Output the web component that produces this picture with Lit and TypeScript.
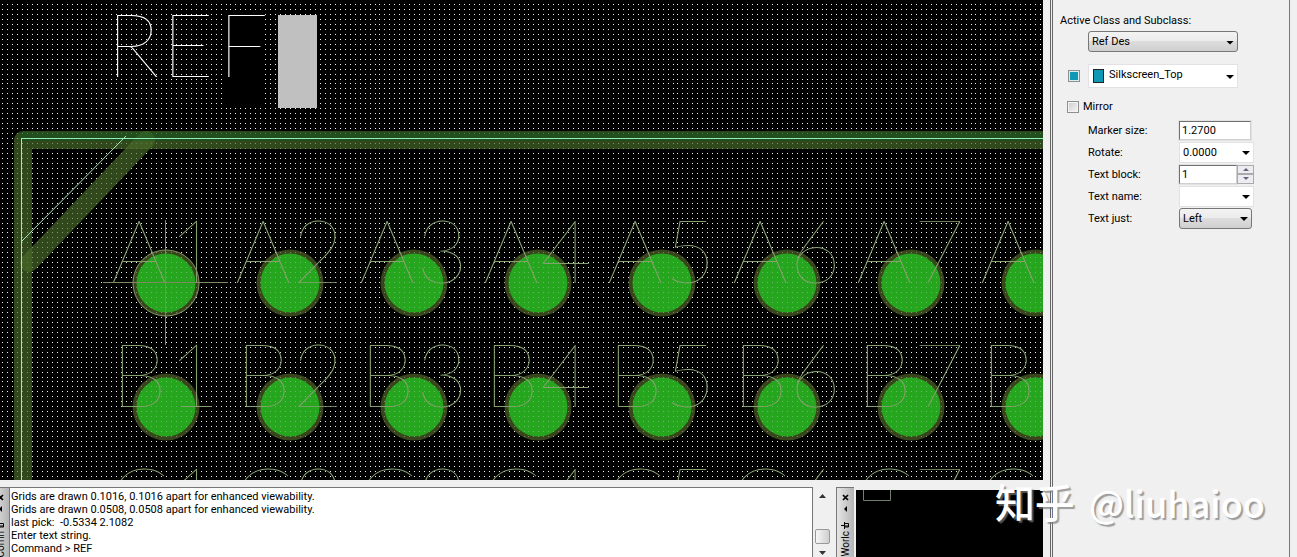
import { LitElement, html, svg, css } from "lit";
import { customElement } from "lit/decorators.js";

const COLS = [166, 290, 414, 538, 662, 787, 911, 1035];
const ROWS: [string, number][] = [["A", 283], ["B", 407], ["C", 531]];
const GRID_TILE = 149;
const GRID_STEPS = 30;

function gridPath(): string {
  const at = (i: number) => Math.round((i * GRID_TILE) / GRID_STEPS);
  let d = "";
  for (let r = 0; r < GRID_STEPS; r++) {
    for (let c = 0; c < GRID_STEPS; c++) d += `M${at(c)} ${at(r)}h1v1h-1z`;
  }
  return d;
}
const GRID = gridPath();

@customElement("board-canvas")
class BoardCanvas extends LitElement {
  static styles = css`
    :host { display: block; background: #000; overflow: hidden; }
    .art { display: block; width: 100%; height: 100%; }
    .dots { fill: #f4f4f4; }
    .veil { fill: none; stroke: #4a6c2a; stroke-opacity: .66; stroke-width: 18; stroke-linejoin: round; stroke-linecap: round; }
    .glow { fill: none; stroke: #0c5a22; stroke-opacity: .4; stroke-width: 9; }
    .edge { fill: none; stroke: #8ff0bb; shape-rendering: crispEdges; }
    .chamfer { fill: none; stroke: #a5e8c2; }
    .ring { fill: #3c4a1e; fill-opacity: .92; }
    .pad { fill: #26a51e; }
    .paddots { fill: url(#dots); opacity: .3; }
    .cross { fill: none; stroke: #7f8a62; }
    .ref { font: 100 89px Lato, sans-serif; fill: #fff; text-anchor: middle; }
    .pin { font: 100 89px Lato, sans-serif; fill: #86a070; text-anchor: middle; }
    .void { fill: #000; }
    .cursor { fill: #c0c0c0; }
  `;
  render() {
    return html`<svg class="art" role="img" aria-label="Board layout">
      <defs>
        <pattern id="dots" x="2" y="4" width="149" height="149" patternUnits="userSpaceOnUse">
          <path class="dots" shape-rendering="crispEdges" d=${GRID}></path>
        </pattern>
      </defs>
      <rect width="100%" height="100%" fill="url(#dots)"></rect>
      <rect class="void" x="223" y="12" width="42" height="95"></rect>
      <rect class="cursor" x="278" y="15" width="39" height="93"></rect>
      <text class="ref" x="133 188 243" y="77">REF</text>
      <path class="veil" d="M3000 140H23V3000"></path>
      <path class="veil" d="M146 140L29 263"></path>
      <path class="glow" d="M3000 136.500H19"></path>
      <path class="edge" d="M3000 138.500H21.500V3000"></path>
      <path class="chamfer" d="M126 136L22 241"></path>
      ${ROWS.map(([row, y]) => COLS.map((x, i) => svg`
        ${y < 500 ? svg`<circle class="ring" cx=${x} cy=${y} r="33.500"></circle>
        <circle class="pad" cx=${x} cy=${y} r="29.500"></circle>
        <circle class="paddots" cx=${x} cy=${y} r="33"></circle>` : ""}
        <text class="pin" x=${`${x - 27} ${x + 28}`} y=${y}>${row}${i + 1}</text>`))}
      <circle class="cross" cx="166" cy="283" r="33"></circle>
      <path class="cross" d="M103 282.500H228M165.500 220V345"></path>
    </svg>`;
  }
}

@customElement("dock-strip")
class DockStrip extends LitElement {
  static properties = { label: {} };
  declare label: string;
  static styles = css`
    :host { display: flex; flex-direction: column; align-items: center; overflow: hidden; box-sizing: border-box; width: 18px; padding-top: 3px; border-top: 1px solid #777; border-left: 1px solid #777; background: linear-gradient(90deg, #e6e6e6, #b4b4b4); }
    .tool { flex: none; border: 0; padding: 0; background: none; height: 12px; display: flex; align-items: center; }
    .pin { margin-top: 4px; }
    .label { writing-mode: vertical-rl; transform: rotate(180deg); font: 10px/13px Roboto, sans-serif; white-space: nowrap; }
  `;
  render() {
    return html`
      <button class="tool" aria-label="Close"><svg width="7" height="7"><path d="M1 1L6 6M6 1L1 6" stroke="#000" stroke-width="1.700"/></svg></button>
      <button class="tool" aria-label="Collapse"><svg width="7" height="6"><path d="M5 0V6L2 3z"/></svg></button>
      <button class="tool pin" aria-label="Pin"><svg width="9" height="9"><path d="M0 4.500H3M3.500 1V8M3 2.500H7.500V6H3M3 5H7" fill="none" stroke="#000"/></svg></button>
      <span class="label">${this.label}</span>`;
  }
}

@customElement("app-root")
class AppRoot extends LitElement {
  static styles = css`
    :host { display: grid; grid-template-columns: minmax(0, 1fr) 254px; height: 100vh; position: relative; overflow: hidden; background: #f0f0f0; color: #000; font: 11px/13px Roboto, sans-serif; }
    .work { display: flex; flex-direction: column; min-width: 0; min-height: 0; }
    .board { flex: 1; min-height: 0; }
    .docks { display: flex; height: 70px; margin-top: 7px; }
    .crop { width: 9px; overflow: hidden; display: flex; justify-content: flex-end; }
    .crop dock-strip, .strip { flex: none; }
    .log { flex: 1; min-width: 0; background: #fff; border: solid #777; border-width: 1px 1px 0; padding: 2px 1px 0; overflow: hidden; }
    .line { margin: 0; white-space: pre; }
    .scroll { width: 23px; display: flex; flex-direction: column; align-items: center; }
    .arrow { height: 18px; display: flex; align-items: center; padding-right: 4px; }
    .track { flex: 1; display: flex; align-items: flex-end; padding: 0 4px 5px 0; }
    .scroll .arrow:last-child { height: 8px; }
    .thumb { width: 15px; height: 15px; box-sizing: border-box; border: 1px solid #999; border-radius: 2px; background: linear-gradient(90deg, #f7f7f7, #cfcfcf); }
    .world { width: 187px; margin: 3px 0 0 2px; background: #000; }
    .world svg { display: block; }
    .panel { box-sizing: border-box; margin: 0 7px; border: solid #777; border-width: 0 1px 0 0; border-left: 3px double #666; padding: 14px 7px; }
    .row { display: flex; align-items: center; }
    .class-row { padding: 4px 0 0 28px; }
    .sub-row { padding: 12px 0 0 8px; gap: 8px; }
    .mirror { padding: 12px 0 0 7px; gap: 4px; }
    .fields { display: grid; grid-template-columns: 91px 75px; grid-auto-rows: 22px; align-items: center; padding: 6px 0 0 28px; }
    select, input, button { font: inherit; color: inherit; }
    .pick { position: relative; display: flex; }
    .pick select { appearance: none; width: 100%; box-sizing: border-box; margin: 0; padding: 0 16px 0 3px; height: 21px; border: 1px solid #e2e2e2; border-radius: 0; background: #fff; }
    .pick::after { content: ""; position: absolute; right: 4px; top: 50%; width: 8px; height: 4px; margin-top: -1px; background: #000; clip-path: polygon(0 0, 100% 0, 50% 100%); pointer-events: none; }
    .wide { width: 150px; }
    .pick .raised { height: 21px; border: 1px solid #777; border-radius: 3px; background: linear-gradient(#f3f3f3, #ebebeb 50%, #dddddd 50%, #cfcfcf); }
    .just { width: 73px; }
    .pick .tall { height: 24px; padding-left: 20px; padding-bottom: 3px; }
    .swatch { position: absolute; left: 5px; top: 5px; width: 9px; height: 12px; border: 1px solid #222; background: #0f98b4; }
    .tick { appearance: none; margin: 0; box-sizing: border-box; width: 12px; height: 12px; border: 1px solid #8e8f8f; box-shadow: inset 0 0 0 1px #f4f4f4; background: linear-gradient(135deg, #cdcdcd, #f6f6f6); flex: none; }
    .tick.on { background: #0f98b4; box-shadow: inset 0 0 0 1px #d8eef2; }
    .box { box-sizing: border-box; margin: 0; padding: 0 0 0 2px; height: 19px; min-width: 0; border: 1px solid; border-color: #707070 #d0d0d0 #d0d0d0 #707070; outline: 1px solid #e2e2e2; background: #fff; }
    .size { width: 72px; }
    .spin { display: flex; }
    .spin .box { width: 58px; }
    .steps { display: flex; flex-direction: column; width: 17px; }
    .step { flex: 1; border: 1px solid #aaa; background: #ececf2; padding: 0; display: flex; align-items: center; justify-content: center; }
    .mark { position: absolute; right: 32px; bottom: 28px; display: flex; align-items: baseline; gap: 14px; font: 500 36px/54px "Noto Sans CJK SC", sans-serif; color: #fff; text-shadow: 2px 2px 1px rgba(120, 120, 120, .7); white-space: pre; }
    .brand { font-size: 40px; }
  `;
  render() {
    return html`
      <main class="work">
        <board-canvas class="board"></board-canvas>
        <div class="docks">
          <div class="crop"><dock-strip label="Comn"></dock-strip></div>
          <div class="log" role="log">
            <p class="line">Grids are drawn 0.1016, 0.1016 apart for enhanced viewability.</p>
            <p class="line">Grids are drawn 0.0508, 0.0508 apart for enhanced viewability.</p>
            <p class="line">last pick:  -0.5334 2.1082</p>
            <p class="line">Enter text string.</p>
            <p class="line">Command &gt; REF</p>
          </div>
          <div class="scroll" aria-hidden="true">
            <span class="arrow"><svg width="7" height="4"><path d="M0 4L3.500 0L7 4z" fill="#333"/></svg></span>
            <span class="track"><span class="thumb"></span></span>
            <span class="arrow"><svg width="7" height="4"><path d="M0 0H7L3.500 4z" fill="#333"/></svg></span>
          </div>
          <dock-strip class="strip" label="Worlc"></dock-strip>
          <div class="world"><svg width="60" height="20"><path d="M7.500 0V10.500H34.500V0" fill="none" stroke="#70806a"/></svg></div>
        </div>
      </main>
      <form class="panel">
        <label for="cls">Active Class and Subclass:</label>
        <div class="row class-row"><span class="pick wide"><select id="cls" class="raised"><option>Ref Des</option></select></span></div>
        <div class="row sub-row">
          <input class="tick on" type="checkbox" checked aria-label="Subclass visible">
          <span class="pick wide"><select class="tall" aria-label="Subclass"><option>Silkscreen_Top</option></select><span class="swatch"></span></span>
        </div>
        <div class="row mirror"><input class="tick" type="checkbox" id="mirror"><label for="mirror">Mirror</label></div>
        <div class="fields">
          <label for="size">Marker size:</label><input class="box size" id="size" .value=${"1.2700"}>
          <label for="rot">Rotate:</label><span class="pick"><select id="rot"><option>0.0000</option></select></span>
          <label for="block">Text block:</label>
          <span class="spin"><input class="box" id="block" .value=${"1"}><span class="steps">
            <button class="step" type="button" aria-label="Increase"><svg width="6" height="3"><path d="M0 3L3 0L6 3z" fill="#667"/></svg></button>
            <button class="step" type="button" aria-label="Decrease"><svg width="6" height="3"><path d="M0 0H6L3 3z" fill="#667"/></svg></button>
          </span></span>
          <label for="name">Text name:</label><span class="pick"><select id="name"><option></option></select></span>
          <label for="just">Text just:</label><span class="pick just"><select id="just" class="raised"><option>Left</option></select></span>
        </div>
      </form>
      <div class="mark"><span class="brand">知乎</span><span>@liuhaioo</span></div>`;
  }
}
